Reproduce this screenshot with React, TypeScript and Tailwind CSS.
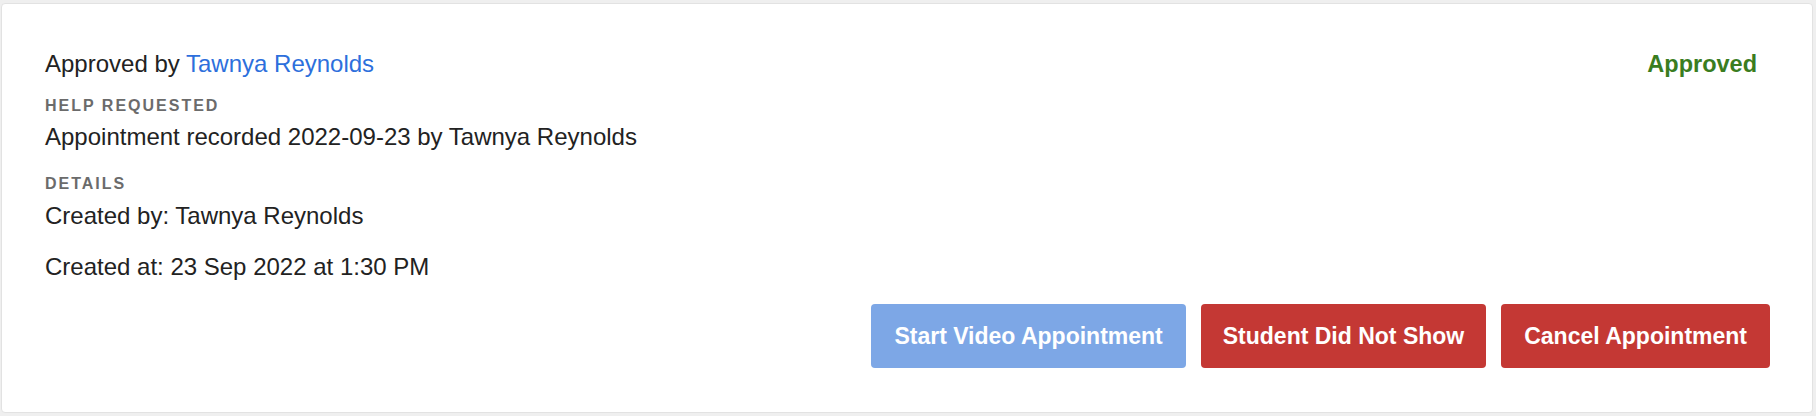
export default function App() {
  return (
    <div
      className="w-[1816px] h-[416px] bg-[#efefef] pt-[3px] pl-[1px] pr-[3px]"
      style={{ fontFamily: '"Liberation Sans", Arial, sans-serif' }}
    >
      <div className="h-[410px] bg-white border border-[#e2e2e2] rounded-[4px] pl-[43px] pr-[42px] pt-[46px] pb-[43px] flex flex-col">
        <div className="flex items-baseline justify-between pr-[13px]">
          <div className="text-[24px] leading-[28px] text-[#222222]">
            Approved by <span className="text-[#2d6fdc]">Tawnya Reynolds</span>
          </div>
          <div className="text-[23.5px] leading-[28px] font-bold text-[#3a7d1f]">Approved</div>
        </div>
        <div className="mt-[18px] text-[16px] leading-[20px] font-bold tracking-[2px] text-[#6b6b6b]">
          HELP REQUESTED
        </div>
        <div className="mt-[7px] text-[24px] leading-[28px] text-[#222222]">
          Appointment recorded 2022-09-23 by Tawnya Reynolds
        </div>
        <div className="mt-[23px] text-[16px] leading-[20px] font-bold tracking-[2px] text-[#6b6b6b]">
          DETAILS
        </div>
        <div className="mt-[8px] text-[24px] leading-[28px] text-[#222222]">
          Created by: Tawnya Reynolds
        </div>
        <div className="mt-[23px] text-[24px] leading-[28px] text-[#222222]">
          Created at: 23 Sep 2022 at 1:30 PM
        </div>
        <div className="mt-[23px] flex justify-end gap-[15px]">
          <button className="h-[64px] px-[23px] rounded-[4px] bg-[#7da7e6] text-white text-[23px] font-bold">
            Start Video Appointment
          </button>
          <button className="h-[64px] px-[22px] rounded-[4px] bg-[#c43834] text-white text-[23px] font-bold">
            Student Did Not Show
          </button>
          <button className="h-[64px] px-[23px] rounded-[4px] bg-[#c43834] text-white text-[23px] font-bold">
            Cancel Appointment
          </button>
        </div>
      </div>
    </div>
  );
}
